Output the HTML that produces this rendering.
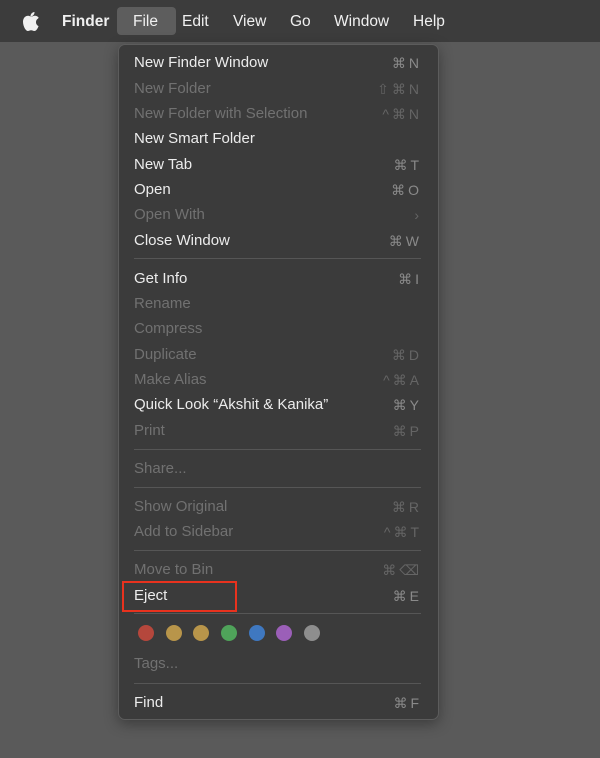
<!DOCTYPE html><html><head><style>
body{margin:0;width:600px;height:758px;background:#5a5a5a;font-family:"Liberation Sans",sans-serif;position:relative;overflow:hidden}
.bar{position:absolute;left:0;top:0;width:600px;height:42px;background:#3c3c3c}
.m{position:absolute;top:13px;font-size:15.5px;color:#f0f0f0}
.menu{position:absolute;left:118px;top:44px;width:319px;height:674px;background:#3b3b3b;border:1px solid #5c5c5c;border-radius:7px;box-shadow:0 4px 14px rgba(0,0,0,.35)}
.r{position:absolute;left:134px;font-size:15px;color:#ececec;line-height:18px;margin-top:1px}
.d{color:#717171}
.s{position:absolute;right:181px;font-size:14px;color:#8a8a8a;line-height:18px;letter-spacing:3px;margin-right:-3px;margin-top:1px}
.sd{color:#656565}
.sep{position:absolute;left:134px;width:287px;height:1px;background:#565656}
.dot{position:absolute;top:625px;width:16px;height:16px;border-radius:50%}
</style></head><body>
<div class="bar"></div>
<div style="position:absolute;left:117px;top:7px;width:59px;height:28px;background:#5d5d5d;border-radius:4px"></div>
<svg style="position:absolute;left:23px;top:12px" width="17" height="19" viewBox="0 0 17 19"><path fill="#f0f0f0" d="M11.5 0c.1 1.2-.4 2.3-1.1 3.1-.7.8-1.8 1.4-2.9 1.3-.1-1.1.4-2.3 1.1-3C9.3.6 10.5 0 11.5 0zM15 6.6c-.2.1-2 1.2-2 3.6 0 2.8 2.5 3.8 2.6 3.8-.1.1-.4 1.4-1.3 2.7-.8 1.2-1.7 2.3-3 2.3s-1.7-.8-3.200-.8-2 .8-3.200.8-2.200-1.200-3-2.400C.9 15 0 12.300 0 9.800 0 5.800 2.600 3.700 5.100 3.700c1.300 0 2.400.9 3.200.9.800 0 2-.9 3.500-.9.600 0 2.600.1 3.900 2z"/></svg>
<div class="m" style="left:62px;font-weight:bold">Finder</div>
<div class="m" style="left:133px">File</div>
<div class="m" style="left:182px">Edit</div>
<div class="m" style="left:233px">View</div>
<div class="m" style="left:290px">Go</div>
<div class="m" style="left:334px">Window</div>
<div class="m" style="left:413px">Help</div>
<div class="menu"></div>
<div class="r" style="top:53px">New Finder Window</div><div class="s" style="top:53px">⌘N</div>
<div class="r d" style="top:79px">New Folder</div><div class="s sd" style="top:79px">⇧⌘N</div>
<div class="r d" style="top:104px">New Folder with Selection</div><div class="s sd" style="top:104px">^⌘N</div>
<div class="r" style="top:129px">New Smart Folder</div>
<div class="r" style="top:155px">New Tab</div><div class="s" style="top:155px">⌘T</div>
<div class="r" style="top:180px">Open</div><div class="s" style="top:180px">⌘O</div>
<div class="r d" style="top:205px">Open With</div><div class="s sd" style="top:205px">›</div>
<div class="r" style="top:231px">Close Window</div><div class="s" style="top:231px">⌘W</div>
<div class="sep" style="top:258px"></div>
<div class="r" style="top:269px">Get Info</div><div class="s" style="top:269px">⌘I</div>
<div class="r d" style="top:294px">Rename</div>
<div class="r d" style="top:319px">Compress</div>
<div class="r d" style="top:345px">Duplicate</div><div class="s sd" style="top:345px">⌘D</div>
<div class="r d" style="top:370px">Make Alias</div><div class="s sd" style="top:370px">^⌘A</div>
<div class="r" style="top:395px">Quick Look “Akshit &amp; Kanika”</div><div class="s" style="top:395px">⌘Y</div>
<div class="r d" style="top:421px">Print</div><div class="s sd" style="top:421px">⌘P</div>
<div class="sep" style="top:449px"></div>
<div class="r d" style="top:459px">Share...</div>
<div class="sep" style="top:487px"></div>
<div class="r d" style="top:497px">Show Original</div><div class="s sd" style="top:497px">⌘R</div>
<div class="r d" style="top:522px">Add to Sidebar</div><div class="s sd" style="top:522px">^⌘T</div>
<div class="sep" style="top:550px"></div>
<div class="r d" style="top:560px">Move to Bin</div><div class="s sd" style="top:560px">⌘⌫</div>
<div class="r" style="top:586px">Eject</div><div class="s" style="top:586px">⌘E</div>
<div style="position:absolute;left:122px;top:581px;width:111px;height:27px;border:2px solid #e8321e"></div>
<div class="sep" style="top:613px"></div>
<div class="dot" style="left:138px;background:#b5473c"></div>
<div class="dot" style="left:166px;background:#b8954a"></div>
<div class="dot" style="left:193px;background:#b8954a"></div>
<div class="dot" style="left:221px;background:#4fa35a"></div>
<div class="dot" style="left:249px;background:#3f78c0"></div>
<div class="dot" style="left:276px;background:#9b5fb8"></div>
<div class="dot" style="left:304px;background:#8e8e8e"></div>
<div class="r d" style="top:654px">Tags...</div>
<div class="sep" style="top:683px"></div>
<div class="r" style="top:693px">Find</div><div class="s" style="top:693px">⌘F</div>
</body></html>
